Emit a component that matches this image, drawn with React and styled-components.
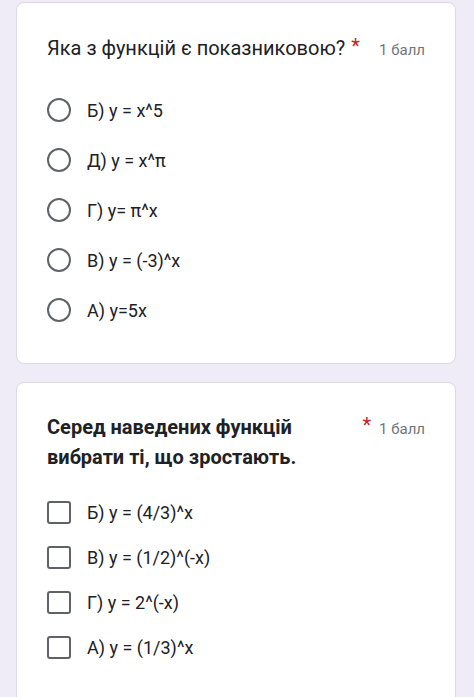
import React from "react";
import styled, { createGlobalStyle } from "styled-components";

const Global = createGlobalStyle`
  html, body { margin: 0; padding: 0; background: #efebf7; }
  body { font-family: Roboto, "Noto Sans", Arial, sans-serif; color: #202124; }
`;

const Page = styled.div`
  height: 697px;
  overflow: hidden;
  padding: 2px 18px 0 16px;
  display: flex;
  flex-direction: column;
  gap: 18px;
  box-sizing: border-box;
`;

const Card = styled.section`
  background: #fff;
  border: 1px solid #dcd9e3;
  border-radius: 8px;
  padding: ${(p) => p.$pad};
  flex-shrink: 0;
`;

const Header = styled.div`
  display: flex;
  align-items: baseline;
`;

const Title = styled.div`
  flex: 0 1 auto;
  font-size: 20px;
  font-weight: ${(p) => (p.$bold ? 700 : 400)};
  line-height: 30px;
  color: #202124;
`;

const Star = styled.span`
  color: #c5221f;
  font-size: 20px;
  margin-left: 6px;
  position: relative;
  top: -2px;
`;

const Points = styled.span`
  margin-left: auto;
  padding-left: 8px;
  font-size: 15px;
  color: #70757a;
  white-space: nowrap;
`;

const Options = styled.div`
  display: flex;
  flex-direction: column;
  margin-top: ${(p) => p.$mt}px;
`;

const Row = styled.label`
  display: flex;
  align-items: center;
  height: ${(p) => p.$h}px;
  gap: 16px;
  font-size: 18px;
  color: #202124;
`;

const Radio = styled.span`
  width: 24px;
  height: 24px;
  box-sizing: border-box;
  border: 2.5px solid #5f6368;
  border-radius: 50%;
  flex-shrink: 0;
`;

const Check = styled.span`
  width: 24px;
  height: 23px;
  box-sizing: border-box;
  border: 2.5px solid #5f6368;
  border-radius: 3px;
  flex-shrink: 0;
`;

const q1 = ["Б) y = x^5", "Д) y = x^π", "Г) y= π^x", "В) y = (-3)^x", "А) y=5x"];
const q2 = ["Б) y = (4/3)^x", "В) y = (1/2)^(-x)", "Г) y = 2^(-x)", "А) y = (1/3)^x"];

export default function App() {
  return (
    <>
      <Global />
      <Page>
        <Card $pad="30px 30px 28px 30px">
          <Header>
            <Title>Яка з функцій є показниковою?</Title>
            <Star>*</Star>
            <Points>1 балл</Points>
          </Header>
          <Options $mt={22}>
            {q1.map((t) => (
              <Row key={t} $h={50}>
                <Radio />
                <span>{t}</span>
              </Row>
            ))}
          </Options>
        </Card>
        <Card $pad="29px 30px 60px 30px">
          <Header>
            <Title $bold>Серед наведених функцій вибрати ті, що зростають.</Title>
            <Star>*</Star>
            <Points>1 балл</Points>
          </Header>
          <Options $mt={18}>
            {q2.map((t) => (
              <Row key={t} $h={45}>
                <Check />
                <span>{t}</span>
              </Row>
            ))}
          </Options>
        </Card>
      </Page>
    </>
  );
}
